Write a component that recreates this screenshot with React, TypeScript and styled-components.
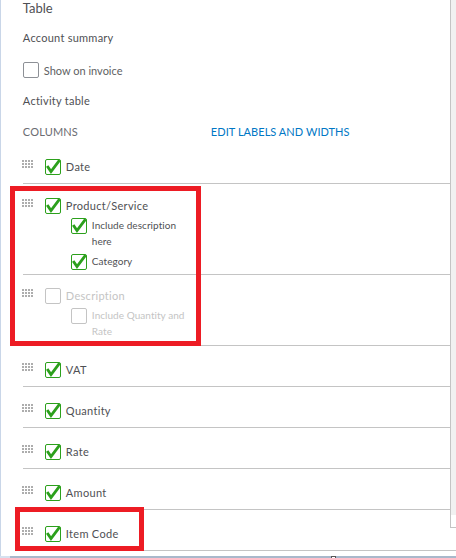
import styled, { createGlobalStyle } from "styled-components";

const GlobalStyle = createGlobalStyle`
  html, body {
    margin: 0;
    padding: 0;
    background: #fff;
  }
  body {
    font-family: Lato, "Liberation Sans", sans-serif;
    color: #4f5054;
  }
`;

const plainColumns = ["VAT", "Quantity", "Rate", "Amount"];

const GripIcon = () => (
  <GripSvg width="11" height="9" viewBox="0 0 11 9">
    {[0, 3, 6].map((y) =>
      [0, 3, 6, 9].map((x) => (
        <rect key={`${x}-${y}`} x={x} y={y} width="2" height="2" fill="#adadad" />
      )),
    )}
  </GripSvg>
);

const Check = ({ checked, disabled }: { checked?: boolean; disabled?: boolean }) => (
  <Box $checked={checked} $disabled={disabled}>
    {checked && (
      <svg width="16" height="16" viewBox="0 0 16 16">
        <path d="M2.2 7 L6 12.6 L14.6 1.2" fill="none" stroke="#2ca01c" strokeWidth="2.8" />
      </svg>
    )}
  </Box>
);

const App = () => {
  return (
    <Page>
      <GlobalStyle />
      <Body>
        <Strip />
        <Content>
          <Title>Table</Title>
          <Heading>Account summary</Heading>
          <InvoiceRow>
            <Check />
            <InvoiceLabel>Show on invoice</InvoiceLabel>
          </InvoiceRow>
          <Heading>Activity table</Heading>
          <ColumnsHeader>
            <ColumnsTitle>COLUMNS</ColumnsTitle>
            <EditLink>EDIT LABELS AND WIDTHS</EditLink>
          </ColumnsHeader>

          <Row>
            <GripIcon />
            <Check checked />
            <Label>Date</Label>
          </Row>

          <TallRow $top={14} $bottom={4}>
            <GripIcon />
            <Check checked />
            <Stack>
              <Label>Product/Service</Label>
              <SubRow>
                <Check checked />
                <SubLabel>Include description here</SubLabel>
              </SubRow>
              <SubRow>
                <Check checked />
                <SubLabel>Category</SubLabel>
              </SubRow>
            </Stack>
          </TallRow>

          <TallRow $top={13} $bottom={5}>
            <GripIcon />
            <Check disabled />
            <Stack>
              <Label $disabled>Description</Label>
              <SubRow>
                <Check disabled />
                <SubLabel $disabled>Include Quantity and Rate</SubLabel>
              </SubRow>
            </Stack>
          </TallRow>

          {plainColumns.map((column) => (
            <Row key={column}>
              <GripIcon />
              <Check checked />
              <Label>{column}</Label>
            </Row>
          ))}

          <LastRow>
            <GripIcon />
            <Check checked />
            <Label>Item Code</Label>
          </LastRow>
        </Content>
        <ScrollColumn>
          <ScrollTrack />
        </ScrollColumn>
      </Body>
      <BottomBar>
        <BottomLeft />
        <BottomFill>
          <Handle />
        </BottomFill>
      </BottomBar>
      <Highlight $left={10} $top={186} $width={191} $height={160} />
      <Highlight $left={15} $top={507} $width={129} $height={44} />
    </Page>
  );
};

const Page = styled.div`
  position: relative;
  width: 456px;
  height: 558px;
  overflow: hidden;
  display: flex;
  flex-direction: column;
`;

const Body = styled.div`
  flex: 1;
  display: flex;
  min-height: 0;
`;

const Strip = styled.div`
  width: 1px;
  background: #c9d6e8;
`;

const Content = styled.div`
  width: 427px;
  margin-left: 22px;
  flex-shrink: 0;
`;

const Title = styled.div`
  font-size: 13px;
  line-height: 16px;
`;

const Heading = styled.div`
  font-size: 11px;
  line-height: 14px;
  letter-spacing: 0.25px;
  margin-top: 15px;
`;

const InvoiceRow = styled.div`
  display: flex;
  align-items: center;
  gap: 5px;
  margin-top: 17px;
  margin-bottom: 16px;
`;

const InvoiceLabel = styled.span`
  font-size: 11px;
  color: #5e5f63;
`;

const ColumnsHeader = styled.div`
  display: flex;
  font-size: 11px;
  line-height: 14px;
  margin-top: 17px;
  margin-bottom: 4px;
`;

const ColumnsTitle = styled.span`
  width: 188px;
  letter-spacing: 0.15px;
  color: #6b6c72;
`;

const EditLink = styled.span`
  letter-spacing: 0.05px;
  color: #0077c5;
`;

const GripSvg = styled.svg`
  display: block;
  margin: 1px 0 0 -1px;
`;

const Box = styled.span<{ $checked?: boolean; $disabled?: boolean }>`
  display: block;
  width: 16px;
  height: 16px;
  box-sizing: border-box;
  flex-shrink: 0;
  border: 1px solid ${(p) => (p.$checked ? "#2ca01c" : p.$disabled ? "#c4c4c4" : "#8d9096")};
  border-radius: 2px;
  background: #fff;

  svg {
    display: block;
    margin: -1px;
    overflow: visible;
  }
`;

const Row = styled.div`
  display: grid;
  grid-template-columns: 17px 16px auto;
  column-gap: 5px;
  align-items: start;
  height: 41px;
  box-sizing: border-box;
  padding-top: 16px;
  border-bottom: 1px solid #c4c4c4;
`;

const TallRow = styled(Row)<{ $top: number; $bottom: number }>`
  height: auto;
  padding-top: ${(p) => p.$top}px;
  padding-bottom: ${(p) => p.$bottom}px;
`;

const LastRow = styled(Row)`
  margin-right: -7px;
`;

const Label = styled.span<{ $disabled?: boolean }>`
  font-size: 11px;
  line-height: 15px;
  letter-spacing: 0.3px;
  color: ${(p) => (p.$disabled ? "#c4c4c4" : "#4f5054")};
`;

const Stack = styled.div`
  display: flex;
  flex-direction: column;
`;

const SubRow = styled.div`
  display: flex;
  gap: 5px;
  margin-left: 5px;
  margin-top: 4px;

  ${Label} + & {
    margin-top: 5px;
  }
`;

const SubLabel = styled.span<{ $disabled?: boolean }>`
  font-size: 10px;
  line-height: 16px;
  letter-spacing: 0.05px;
  width: 96px;
  margin-top: -1px;
  margin-bottom: 1px;
  color: ${(p) => (p.$disabled ? "#c4c4c4" : "#4f5054")};
`;

const ScrollColumn = styled.div`
  width: 6px;
  height: 527px;
  border-left: 1px solid #c4c4c4;
  border-bottom: 1px solid #c4c4c4;
`;

const ScrollTrack = styled.div`
  height: 515px;
  background: #f1f1f1;
`;

const BottomBar = styled.div`
  display: flex;
  height: 2px;
`;

const BottomLeft = styled.div`
  width: 10px;
  background: #d5e1ef;
`;

const BottomFill = styled.div`
  position: relative;
  flex: 1;
  background: #a9b8cb;
`;

const Handle = styled.div`
  position: absolute;
  left: 321px;
  top: 0;
  width: 3px;
  height: 2px;
  background: #fff;
  border: 1px solid #555;
  border-bottom: none;
`;

const Highlight = styled.div<{ $left: number; $top: number; $width: number; $height: number }>`
  position: absolute;
  left: ${(p) => p.$left}px;
  top: ${(p) => p.$top}px;
  width: ${(p) => p.$width}px;
  height: ${(p) => p.$height}px;
  box-sizing: border-box;
  border: 5px solid #ed1c24;
`;

export default App;
